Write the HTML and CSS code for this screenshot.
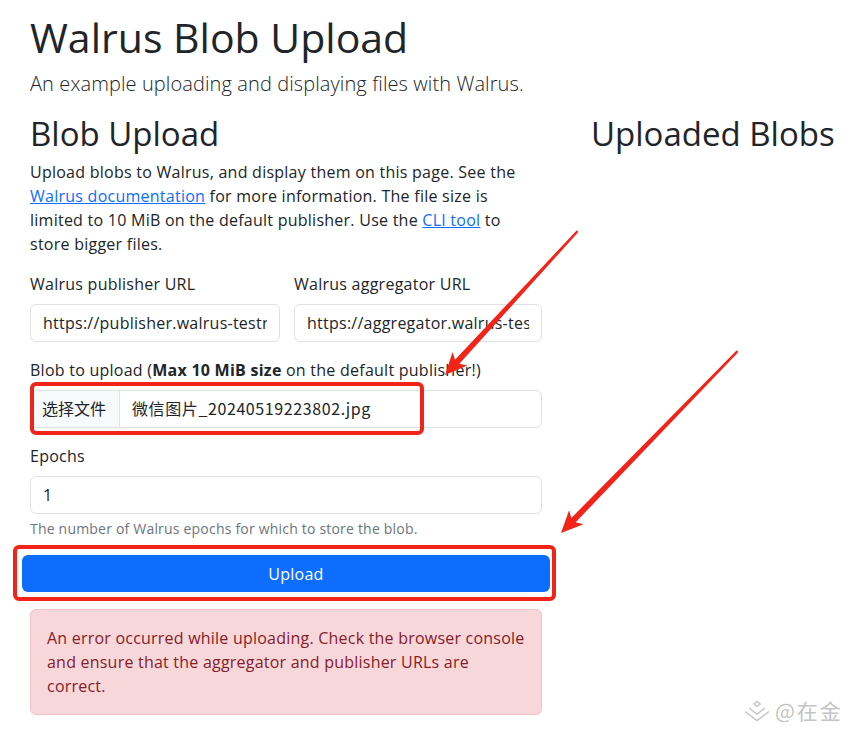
FILE: index.html
```html
<!DOCTYPE html>
<html lang="en">
<head>
<meta charset="utf-8">
<title>Walrus Blob Upload</title>
<link rel="stylesheet" href="styles.css">
</head>
<body>
<div class="page">
  <header class="intro">
    <h1 class="title">Walrus Blob Upload</h1>
    <p class="lead">An example uploading and displaying files with Walrus.</p>
  </header>
  <div class="row">
    <section class="col-upload">
      <h2 class="heading">Blob Upload</h2>
      <p class="desc">Upload blobs to Walrus, and display them on this page. See the<br><a href="#">Walrus documentation</a> for more information. The file size is<br>limited to 10 MiB on the default publisher. Use the <a href="#">CLI tool</a> to<br>store bigger files.</p>
      <form class="form">
        <div class="url-grid">
          <div class="url-field">
            <label class="label">Walrus publisher URL</label>
            <input class="control" type="text" value="https://publisher.walrus-testnet.walrus.space">
          </div>
          <div class="url-field">
            <label class="label">Walrus aggregator URL</label>
            <input class="control" type="text" value="https://aggregator.walrus-testnet.walrus.space">
          </div>
        </div>
        <div class="field">
          <label class="label">Blob to upload (<b>Max 10 MiB size</b> on the default publisher!)</label>
          <div class="file">
            <span class="file-btn">选择文件</span>
            <span class="file-name">微信图片_20240519223802.jpg</span>
          </div>
        </div>
        <div class="field-last">
          <label class="label">Epochs</label>
          <input class="control" type="text" value="1">
          <div class="help">The number of Walrus epochs for which to store the blob.</div>
        </div>
        <button class="btn" type="button">Upload</button>
      </form>
      <div class="alert">An error occurred while uploading. Check the browser console<br>and ensure that the aggregator and publisher URLs are<br>correct.</div>
    </section>
    <section class="col-blobs">
      <h2 class="heading">Uploaded Blobs</h2>
    </section>
  </div>

  <svg class="annotations" width="854" height="731" viewBox="0 0 854 731">
    <rect x="32" y="384" width="390" height="49" rx="4" fill="none" stroke="#f2241a" stroke-width="4"/>
    <rect x="15" y="547" width="539" height="52" rx="4" fill="none" stroke="#f2241a" stroke-width="4"/>
    <polygon fill="#f2241a" points="578,231 577.5,233 459.4,363.8 467.3,365.6 445,375 452.6,352 455,359.8 576.6,230.5"/>
    <polygon fill="#f2241a" points="738,351 737.5,353 575.7,522.2 583.5,524.2 561,533 569.1,510.2 571.3,518 736.5,350.5"/>
  </svg>

  <div class="watermark">
    <svg class="wm-logo" width="28" height="22" viewBox="0 0 28 22">
      <path d="M11 4 L14 1.5 L17 4 L14 6.5 Z" fill="none" stroke="#c4c4c4" stroke-width="1.4"/>
      <path d="M6 8 L14 14 L22 8" fill="none" stroke="#c4c4c4" stroke-width="1.4"/>
      <path d="M2 11.5 L14 20.5 L26 11.5" fill="none" stroke="#c4c4c4" stroke-width="1.4"/>
    </svg>
    <span class="wm-text">@在金</span>
  </div>
</div>
</body>
</html>
```

FILE: styles.css
```css
* {
  box-sizing: border-box;
}

body {
  margin: 0;
  font-family: "Open Sans", "Noto Sans CJK SC", sans-serif;
  font-size: 16px;
  line-height: 1.5;
  letter-spacing: 0.25px;
  color: #212529;
  background: #fff;
}

.page {
  position: relative;
  height: 731px;
  overflow: hidden;
  padding: 13px 0 0 30px;
}

.title {
  margin: 0 0 8px;
  font-size: 41px;
  font-weight: 400;
  line-height: 48px;
  letter-spacing: 0;
}

.lead {
  margin: 0 0 16px;
  font-size: 20px;
  font-weight: 300;
  line-height: 30px;
  letter-spacing: 0.1px;
}

.row {
  display: flex;
  gap: 49px;
}

.col-upload {
  width: 512px;
  flex: none;
}

.heading {
  margin: 0 0 7px;
  font-size: 33px;
  font-weight: 400;
  line-height: 38px;
  letter-spacing: 0;
}

.desc {
  margin: 0 0 16px;
}

.desc a {
  color: #0d6efd;
}

.url-grid {
  display: grid;
  grid-template-columns: 250px 248px;
  column-gap: 14px;
  margin-bottom: 16px;
}

.label {
  display: block;
  margin-bottom: 8px;
}

.control {
  display: block;
  width: 100%;
  height: 38px;
  padding: 6px 12px;
  font: inherit;
  letter-spacing: inherit;
  color: #212529;
  background: #fff;
  border: 1px solid #dee2e6;
  border-radius: 6px;
  outline: none;
}

.field {
  margin-bottom: 16px;
}

.file {
  display: flex;
  height: 38px;
  border: 1px solid #dee2e6;
  border-radius: 6px;
  overflow: hidden;
  font-family: "Noto Sans CJK SC", sans-serif;
  font-size: 16px;
  letter-spacing: 0;
}

.file-btn {
  flex: none;
  width: 89px;
  padding: 5px 11px;
  background: #f8f9fa;
  border-right: 1px solid #dee2e6;
}

.file-name {
  padding: 5px 12px;
  letter-spacing: 0.6px;
}

.help {
  margin-top: 4px;
  font-size: 14px;
  line-height: 21px;
  letter-spacing: 0.2px;
  color: #6c757d;
}

.btn {
  display: block;
  width: 528px;
  height: 37px;
  margin: 16px -8px 0;
  padding: 0 0 0 20px;
  font: inherit;
  letter-spacing: inherit;
  color: #fff;
  background: #0d6efd;
  border: 0;
  border-radius: 6px;
}

.alert {
  margin-top: 17px;
  padding: 16px 8px 16px 16px;
  color: #842029;
  background: #f8d7da;
  border: 1px solid #f5c2c7;
  border-radius: 6px;
  letter-spacing: 0.22px;
  white-space: nowrap;
}

.annotations {
  position: absolute;
  left: 0;
  top: 0;
  pointer-events: none;
}

.watermark {
  position: absolute;
  left: 743px;
  top: 695px;
  display: flex;
  align-items: center;
  gap: 4px;
}

.wm-text {
  font-family: "Noto Sans CJK SC", sans-serif;
  font-size: 21px;
  color: #c4c4c4;
  letter-spacing: 2px;
}
```
